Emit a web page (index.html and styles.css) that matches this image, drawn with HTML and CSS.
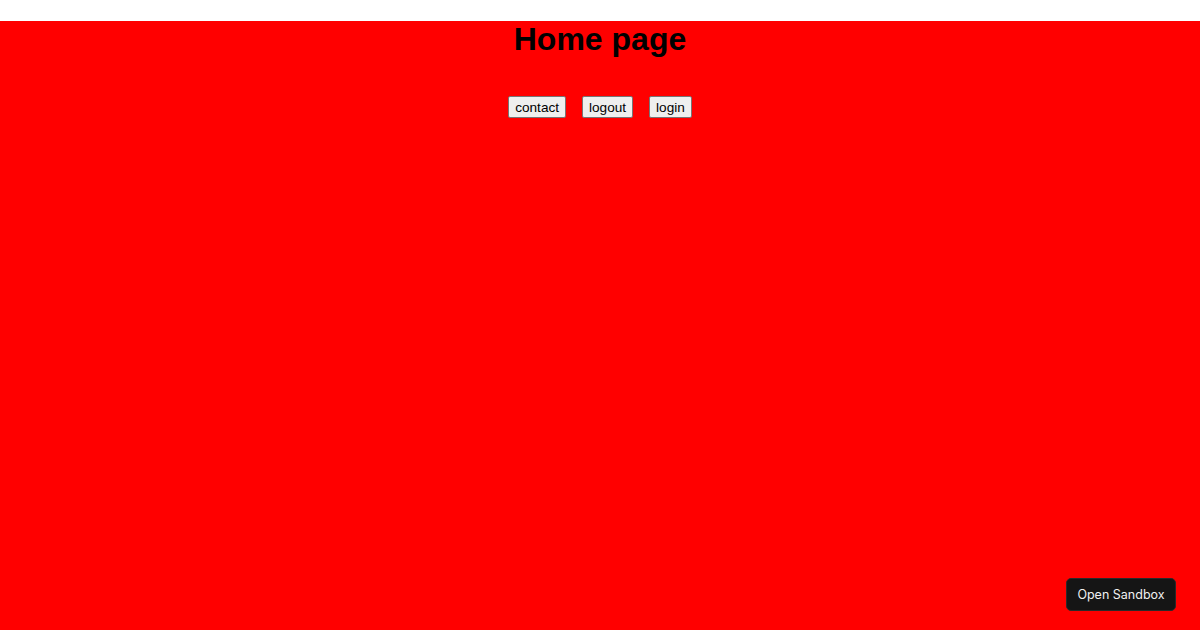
FILE: index.html
```html
<!DOCTYPE html>
<html>
<head>
<meta charset="utf-8">
<link rel="stylesheet" href="styles.css">
</head>
<body>
<div class="page">
  <h1 class="title">Home page</h1>
  <div class="nav">
    <button class="btn">contact</button>
    <button class="btn">logout</button>
    <button class="btn">login</button>
  </div>
</div>
<a class="sandbox">Open Sandbox</a>
</body>
</html>
```
FILE: styles.css
```css
html, body {
  margin: 0;
  padding: 0;
  background: #fff;
}
body {
  font-family: "Liberation Sans", Arial, sans-serif;
}
.page {
  margin-top: 21px;
  background: #ff0000;
  min-height: 609px;
  text-align: center;
  overflow: hidden;
}
.title {
  font-size: 32px;
  font-weight: bold;
  margin: 0;
  line-height: 37px;
  color: #000;
}
.nav {
  padding-top: 38px;
  display: flex;
  justify-content: center;
  gap: 16px;
}
.btn {
  font-family: "Liberation Sans", Arial, sans-serif;
  font-size: 13.6px;
  background: #efefef;
  border: 1px solid #767676;
  border-radius: 2px;
  padding: 1px 6px;
  height: 22px;
  color: #000;
}
.sandbox {
  position: fixed;
  right: 24px;
  bottom: 19px;
  width: 110px;
  height: 33px;
  box-sizing: border-box;
  background: #151515;
  border: 1px solid #2a2a2a;
  border-radius: 5px;
  color: #f0f0f0;
  font-family: Inter, "Liberation Sans", sans-serif;
  font-size: 12.5px;
  display: flex;
  align-items: center;
  justify-content: center;
}
```
